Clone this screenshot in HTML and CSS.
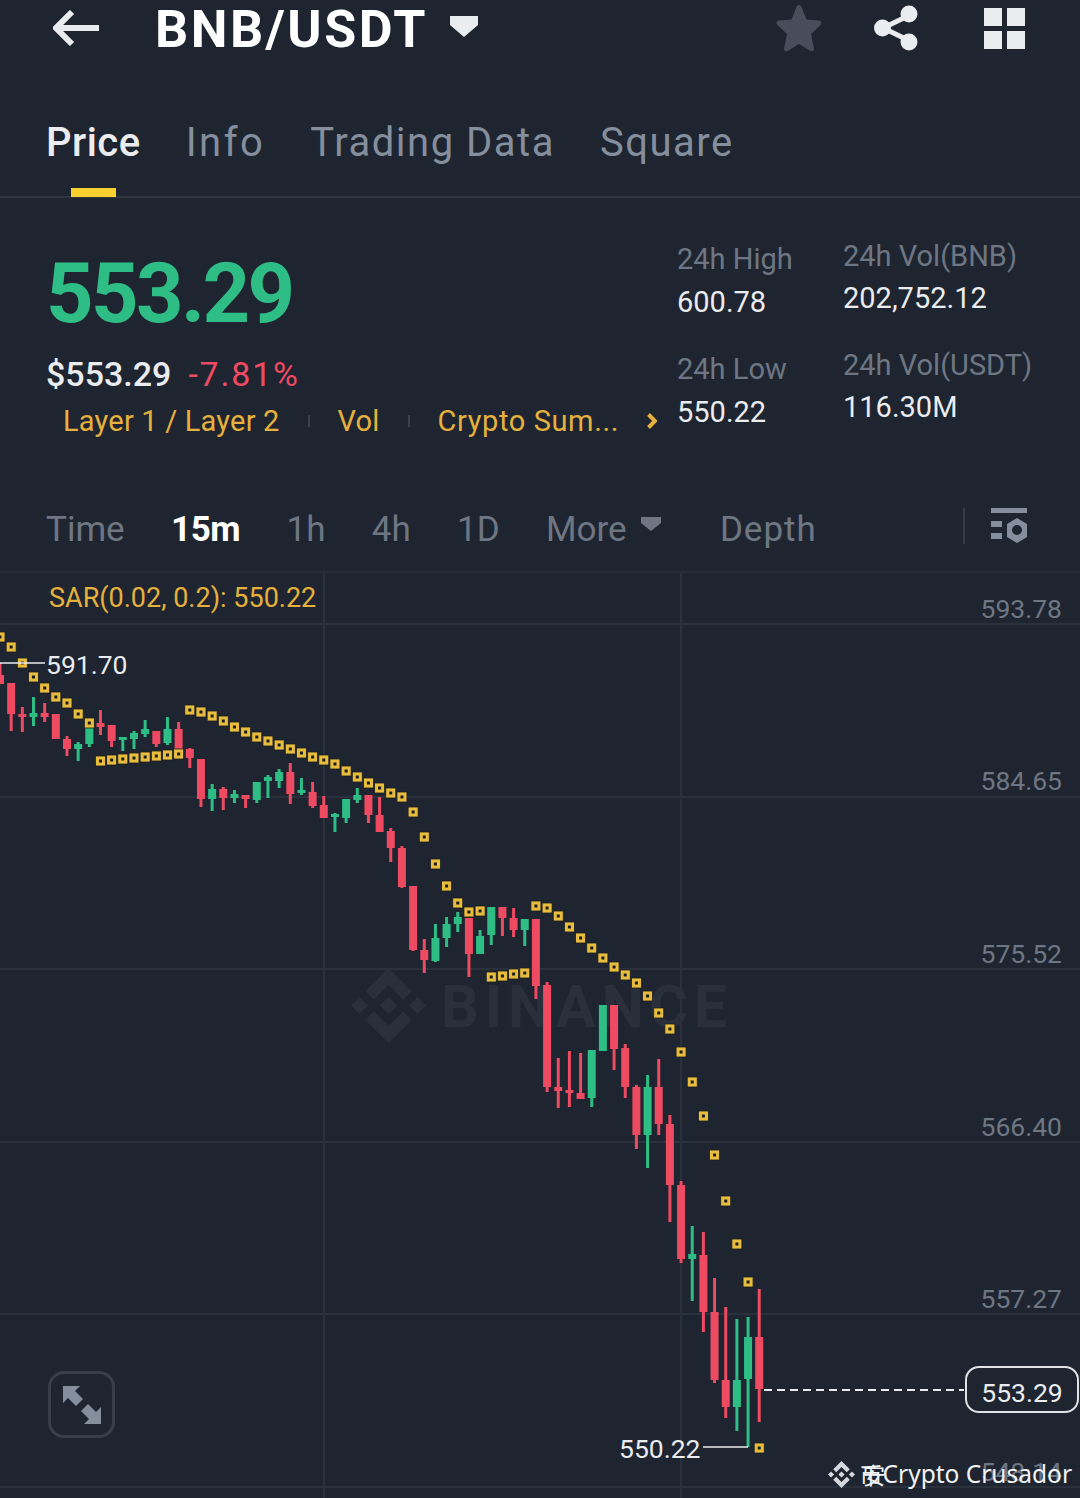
FILE: index.html
```html
<!DOCTYPE html>
<html lang="en">
<head>
    <meta charset="UTF-8">
    <title>BNB/USDT</title>
    <link rel="stylesheet" href="styles.css">
</head>
<body>

    <header class="topbar">
        <svg class="back-icon" viewBox="0 0 46 36"><path d="M19 2 3 18l16 16M4 18h42"/></svg>
        <h1 class="pair">BNB/USDT</h1>
        <svg class="pair-caret" viewBox="0 0 28 21"><path d="M0 0h28v9L14 21 0 9z"/></svg>
        <div class="top-icons">
            <svg class="star-icon" viewBox="0 0 46 48"><path d="M23 1c1.500 0 2.300 1 3 3l4.500 11.500 12 1c3 .3 3.800 2.700 1.800 4.700l-9.300 8.800 2.800 14c.5 3-1.300 4-3.800 2.800L23 40l-11 6.800c-2.500 1.200-4.300.2-3.800-2.800L11 30 1.700 21.200c-2-2-1.200-4.400 1.800-4.700l12-1L20 4c.7-2 1.500-3 3-3z"/></svg>
            <svg class="share-icon" viewBox="0 0 46 46">
                <path class="share-line" d="M36 10 9 23l27 13"/>
                <circle cx="35" cy="9" r="8.500"/>
                <circle cx="8.500" cy="23" r="8.500"/>
                <circle cx="35" cy="37" r="8.500"/>
            </svg>
            <svg class="grid-icon" viewBox="0 0 41 41">
                <rect x="0" y="0" width="18" height="18"/>
                <rect x="23" y="0" width="18" height="18"/>
                <rect x="0" y="23" width="18" height="18"/>
                <rect x="23" y="23" width="18" height="18"/>
            </svg>
        </div>
    </header>

    <nav class="tabs">
        <a class="tab active">Price</a>
        <a class="tab tab-short">Info</a>
        <a class="tab">Trading Data</a>
        <a class="tab">Square</a>
    </nav>

    <section class="stats">
        <div class="stats-main">
            <div class="last-price">553.29</div>
            <div class="price-line">
                <span class="usd-price">$553.29</span>
                <span class="change">-7.81%</span>
            </div>
            <div class="tags">
                <span>Layer 1 / Layer 2</span>
                <i class="tag-sep"></i>
                <span>Vol</span>
                <i class="tag-sep"></i>
                <span class="tag-long">Crypto Sum...</span>
                <svg class="tag-arrow" viewBox="0 0 10 16"><path d="M1.500 1.500 8 8l-6.500 6.500"/></svg>
            </div>
        </div>
        <div class="stats-col">
            <div class="stat"><span class="stat-label">24h High</span><span class="stat-value">600.78</span></div>
            <div class="stat"><span class="stat-label">24h Low</span><span class="stat-value">550.22</span></div>
        </div>
        <div class="stats-col vol">
            <div class="stat"><span class="stat-label">24h Vol(BNB)</span><span class="stat-value">202,752.12</span></div>
            <div class="stat"><span class="stat-label">24h Vol(USDT)</span><span class="stat-value">116.30M</span></div>
        </div>
    </section>

    <div class="intervals">
        <span>Time</span>
        <span class="current">15m</span>
        <span>1h</span>
        <span>4h</span>
        <span>1D</span>
        <span class="more">More<svg class="more-caret" viewBox="0 0 20 14"><path d="M0 0h20v6l-10 8L0 6z"/></svg></span>
        <span class="depth">Depth</span>
        <i class="interval-sep"></i>
        <svg class="settings-icon" viewBox="0 0 37 36">
            <rect x="0" y="0" width="36" height="5"/>
            <rect x="0" y="13" width="11" height="6"/>
            <rect x="0" y="25" width="11" height="6"/>
            <path fill-rule="evenodd" d="M26 10l10 6v13l-10 6-10-6V16zM26 17a5 5 0 1 0 0 10 5 5 0 0 0 0-10z"/>
        </svg>
    </div>

    <div class="chart">
        <svg id="chartSvg" class="chart-svg" viewBox="0 573 1080 925"></svg>
        <button class="expand-btn">
            <svg viewBox="0 0 38 38"><path d="M0 0h17l-5 5 8 8-7 7-8-8-5 5zM38 38H21l5-5-8-8 7-7 8 8 5-5z"/></svg>
        </button>
        <div class="price-tag">553.29</div>
        <div class="credit">
            <svg class="credit-logo" viewBox="0 0 126.610 126.610"><path d="M38.730 53.200 63.310 28.620 87.900 53.210l14.300-14.300L63.310 0 24.420 38.900zM0 63.310l14.300-14.300 14.300 14.300-14.300 14.300zM38.730 73.410 63.310 97.990 87.900 73.400l14.310 14.300-38.900 38.910-38.890-38.890zM98.010 63.310l14.300-14.300 14.300 14.300-14.300 14.300zM77.820 63.300 63.310 48.780 48.810 63.280 63.310 77.820z"/></svg>
            <span class="credit-cjk">币安</span><span>Crypto Crusador</span>
        </div>
    </div>

    <script src="chart.js"></script>
</body>
</html>
```

FILE: styles.css
```css
/* Estilo general */
body {
    width: 1080px;
    height: 1498px;
    margin: 0;
    overflow: hidden;
    display: flex;
    flex-direction: column;
    background-color: #1e2530;
    color: #eaecef;
    font-family: Roboto, "Liberation Sans", sans-serif;
}

/* Top bar */
.topbar {
    height: 56px;
    display: flex;
    align-items: center;
    padding-left: 53px;
    padding-right: 55px;
}
.back-icon {
    width: 46px;
    height: 36px;
    fill: none;
    stroke: #eaecef;
    stroke-width: 6;
}
.pair {
    margin: 2px 0 0 56px;
    font-size: 52px;
    font-weight: 700;
    letter-spacing: 2.5px;
    color: #fff;
}
.pair-caret {
    width: 28px;
    height: 21px;
    margin: -4px 0 0 22px;
    fill: #eaecef;
}
.top-icons {
    margin-left: auto;
    display: flex;
    align-items: center;
}
.star-icon { width: 46px; height: 48px; fill: #474d5b; }
.share-icon { width: 46px; height: 46px; margin-left: 52px; fill: #eaecef; }
.share-line { fill: none; stroke: #eaecef; stroke-width: 5; }
.grid-icon { width: 41px; height: 41px; margin-left: 64px; fill: #eaecef; }

/* Tabs */
.tabs {
    height: 142px;
    box-sizing: border-box;
    display: flex;
    gap: 45px;
    padding: 64px 0 0 46px;
    border-bottom: 2px solid #2f3640;
}
.tab {
    position: relative;
    font-size: 40px;
    letter-spacing: 1.5px;
    line-height: 46px;
    height: 46px;
    color: #848e9c;
}
.tab-short { letter-spacing: 2.5px; }
.tab.active { color: #eaecef; font-weight: 500; letter-spacing: .5px; }
.tab.active::after {
    content: "";
    position: absolute;
    left: 25px;
    top: 68px;
    width: 45px;
    height: 9px;
    background-color: #f8d12f;
}

/* Stats */
.stats {
    height: 300px;
    box-sizing: border-box;
    display: flex;
}
.stats-main {
    width: 677px;
    box-sizing: border-box;
    padding: 54px 0 0 46px;
}
.last-price {
    font-size: 83px;
    line-height: 84px;
    font-weight: 700;
    letter-spacing: -2.6px;
    color: #2ebd85;
}
.price-line {
    display: flex;
    gap: 17px;
    margin-top: 18px;
    font-size: 34px;
    line-height: 40px;
}
.usd-price { font-weight: 500; }
.change { color: #ee4a62; letter-spacing: 1.8px; }
.tags {
    display: flex;
    align-items: center;
    margin-top: 7px;
    margin-left: 17px;
    font-size: 29px;
    letter-spacing: .2px;
    line-height: 40px;
    color: #e5b13c;
}
.tag-long { letter-spacing: .6px; }
.tag-sep {
    width: 2px;
    height: 12px;
    margin: 0 28px;
    background-color: #3a414d;
}
.tag-arrow {
    width: 10px;
    height: 16px;
    margin-left: 28px;
    fill: none;
    stroke: #e5b13c;
    stroke-width: 4;
}
.stats-col {
    width: 166px;
    padding-top: 43px;
    display: flex;
    flex-direction: column;
    gap: 31px;
}
.stats-col.vol { margin-top: -3px; }
.stat {
    display: flex;
    flex-direction: column;
    gap: 7px;
    line-height: 36px;
    white-space: nowrap;
}
.vol .stat { gap: 6px; }
.stat-label { font-size: 29px; color: #6f7683; }
.stat-value { font-size: 29px; color: #eaecef; }

/* Intervals */
.intervals {
    height: 75px;
    box-sizing: border-box;
    display: flex;
    align-items: center;
    gap: 46.3px;
    padding: 0 0 11px 46px;
    font-size: 35px;
    color: #6f7683;
    border-bottom: 2px solid #272d38;
}
.intervals .current { color: #fff; font-weight: 700; letter-spacing: -.4px; }
.more { display: flex; align-items: center; }
.more-caret {
    width: 20px;
    height: 14px;
    margin: -10px 0 0 14px;
    fill: #6f7683;
}
.depth { margin-left: 13px; letter-spacing: 1px; }
.interval-sep {
    width: 2px;
    height: 36px;
    margin: -7px 0 0 100px;
    background-color: #353b47;
}
.settings-icon {
    width: 37px;
    height: 36px;
    margin: -7px 0 0 -20px;
    fill: #848e9c;
}

/* Chart */
.chart {
    position: relative;
    flex: 1;
    overflow: hidden;
}
.chart-svg { display: block; width: 1080px; height: 925px; }
.grid-line { stroke: #2b313c; stroke-width: 2; }
.axis-label { font-size: 26.5px; fill: #6f7683; text-anchor: end; }
.sar-label { font-size: 27px; fill: #e5b13c; }
.mark-label { font-size: 26.5px; fill: #eaecef; }
.mark-line { stroke: #eaecef; stroke-width: 1.500; }
.last-line { stroke: #eaecef; stroke-width: 2; stroke-dasharray: 8 5; }
.wm-text { font-size: 59px; font-weight: 700; fill: #2a303b; letter-spacing: 6px; }
.wm-logo { fill: #2a303b; }
.sar-dot { fill: #e8bd3d; stroke: #1a1d22; stroke-width: .8; }
.sar-core { fill: #1a1d22; }
.candle-up { fill: #2ebd85; }
.candle-down { fill: #ee4a62; }

.expand-btn {
    position: absolute;
    left: 48px;
    top: 798px;
    width: 67px;
    height: 67px;
    padding: 0;
    display: flex;
    align-items: center;
    justify-content: center;
    background: none;
    border: 3px solid #383f4b;
    border-radius: 16px;
}
.expand-btn svg { width: 38px; height: 38px; fill: #848e9c; }
.price-tag {
    position: absolute;
    left: 965px;
    top: 793px;
    width: 114px;
    height: 47px;
    box-sizing: border-box;
    border: 2px solid #dfe2e6;
    border-radius: 14px;
    background-color: #1e2530;
    color: #eaecef;
    font-size: 26.5px;
    line-height: 50px;
    text-align: center;
}
.credit {
    position: absolute;
    right: 8px;
    top: 884px;
    display: flex;
    align-items: center;
    font-family: "Noto Sans", "Noto Sans CJK SC", sans-serif;
    font-size: 24.5px;
    line-height: 34px;
    color: #f2f3f5;
}
.credit-logo { width: 27px; height: 27px; margin-right: 5px; fill: #d5d8dd; }
.credit-cjk {
    width: 23px;
    white-space: nowrap;
    letter-spacing: -20px;
    font-family: "Noto Sans CJK SC", sans-serif;
    font-size: 23px;
}
```

FILE: chart.js
```js
// candles: [wickTop, bodyTop, bodyBottom, wickBottom, up?] in page y, one every 11.165px
const candles = [
    [663, 675, 684, 684, 0], [683, 683, 714, 731, 0], [707, 714, 717, 732, 0], [697, 713, 717, 726, 1],
    [703, 713, 717, 722, 0], [714, 714, 739, 739, 0], [736, 739, 749, 756, 0], [742, 744, 749, 761, 1],
    [727, 727, 744, 747, 1], [710, 723, 727, 735, 0], [725, 725, 741, 747, 0], [737, 737, 739, 751, 1],
    [731, 733, 739, 749, 1], [720, 729, 734, 737, 1], [731, 731, 744, 747, 0], [717, 729, 743, 745, 1],
    [722, 729, 750, 750, 0], [748, 749, 758, 768, 0], [759, 759, 799, 807, 0], [784, 789, 799, 811, 1],
    [787, 789, 798, 810, 0], [790, 794, 798, 803, 1], [795, 795, 799, 808, 0], [782, 782, 800, 803, 1],
    [775, 777, 781, 798, 1], [769, 772, 781, 788, 1], [763, 772, 794, 804, 0], [778, 790, 793, 795, 1],
    [782, 792, 806, 808, 0], [796, 805, 818, 818, 0], [813, 814, 817, 832, 1], [799, 799, 818, 823, 1],
    [788, 795, 800, 803, 1], [795, 795, 815, 823, 0], [797, 815, 832, 832, 0], [828, 831, 848, 862, 0],
    [846, 848, 887, 888, 0], [886, 886, 950, 951, 0], [939, 950, 960, 973, 0], [924, 938, 961, 962, 1],
    [917, 924, 938, 947, 1], [912, 917, 924, 932, 1], [918, 918, 954, 977, 0], [930, 936, 954, 954, 1],
    [907, 907, 935, 945, 1], [907, 907, 918, 936, 0], [908, 918, 930, 937, 0], [919, 919, 930, 946, 1],
    [919, 919, 986, 999, 0], [982, 985, 1087, 1092, 0], [1058, 1087, 1091, 1108, 0], [1051, 1090, 1093, 1107, 0],
    [1053, 1093, 1099, 1099, 0], [1050, 1050, 1098, 1107, 1], [1005, 1005, 1051, 1051, 1], [1005, 1005, 1049, 1070, 0],
    [1044, 1048, 1087, 1098, 0], [1085, 1087, 1135, 1149, 0], [1075, 1087, 1135, 1168, 1], [1059, 1087, 1124, 1135, 0],
    [1115, 1124, 1185, 1222, 0], [1181, 1185, 1259, 1263, 0], [1226, 1254, 1259, 1301, 1], [1232, 1255, 1312, 1332, 0],
    [1278, 1312, 1380, 1383, 0], [1307, 1380, 1407, 1418, 0], [1319, 1380, 1407, 1431, 1], [1317, 1337, 1379, 1447, 1],
    [1289, 1337, 1389, 1422, 0]
];

// parabolic SAR, one y per candle
const sar = [
    637, 647, 663, 677, 688, 697, 703, 714, 723, 761, 760, 759, 758, 757, 756, 755, 754,
    710, 712, 716, 721, 727, 732, 737, 741, 745, 749, 753, 757, 760, 764, 771, 777, 783, 788, 793, 797, 812, 837,
    864, 886, 903, 912, 911, 977, 976, 974, 973,
    906, 908, 916, 927, 938, 948, 958, 967, 975, 983, 996, 1013, 1029, 1052, 1082, 1116, 1155, 1201, 1244, 1282, 1448
];

const step = 11.165;
let out = "";

[624, 797, 969, 1142, 1314, 1487].forEach(y => {
    out += `<line class="grid-line" x1="0" x2="1080" y1="${y}" y2="${y}"/>`;
});
[324, 681].forEach(x => {
    out += `<line class="grid-line" x1="${x}" x2="${x}" y1="573" y2="1498"/>`;
});

// watermark sits under the candles
out += `<svg class="wm-logo" x="351" y="968" width="75" height="75" viewBox="0 0 126.610 126.610"><path d="M38.730 53.200 63.310 28.620 87.900 53.210l14.300-14.300L63.310 0 24.420 38.900zM0 63.310l14.300-14.300 14.300 14.300-14.300 14.300zM38.730 73.410 63.310 97.990 87.900 73.400l14.310 14.300-38.900 38.910-38.890-38.890zM98.010 63.310l14.300-14.300 14.300 14.300-14.300 14.300zM77.820 63.300 63.310 48.780 48.810 63.280 63.310 77.820z"/></svg>`;
out += `<text class="wm-text" x="441" y="1027">BINANCE</text>`;

[["593.78", 618], ["584.65", 790], ["575.52", 963], ["566.40", 1136], ["557.27", 1308], ["548.14", 1481]].forEach(([t, y]) => {
    out += `<text class="axis-label" x="1062" y="${y}">${t}</text>`;
});
out += `<text class="sar-label" x="49" y="607">SAR(0.02, 0.2): 550.22</text>`;

candles.forEach(([wt, bt, bb, wb, up], i) => {
    const x = i * step;
    const cls = up ? "candle-up" : "candle-down";
    out += `<rect class="${cls}" x="${x - 1.5}" y="${wt}" width="3" height="${wb - wt}"/>`;
    out += `<rect class="${cls}" x="${x - 4}" y="${bt}" width="8" height="${Math.max(bb - bt, 3)}"/>`;
});

sar.forEach((y, i) => {
    const x = i * step;
    out += `<rect class="sar-dot" x="${x - 5}" y="${y - 5}" width="10" height="10"/>`;
    out += `<rect class="sar-core" x="${x - 1.5}" y="${y - 1.5}" width="3" height="3"/>`;
});

// high and low marks, last price line
out += `<line class="mark-line" x1="0" x2="45" y1="663" y2="663"/>`;
out += `<text class="mark-label" x="46" y="674">591.70</text>`;
out += `<line class="mark-line" x1="703" x2="748" y1="1447" y2="1447"/>`;
out += `<text class="mark-label" x="619" y="1458">550.22</text>`;
out += `<line class="last-line" x1="764" x2="964" y1="1390" y2="1390"/>`;

document.getElementById("chartSvg").innerHTML = out;
```
